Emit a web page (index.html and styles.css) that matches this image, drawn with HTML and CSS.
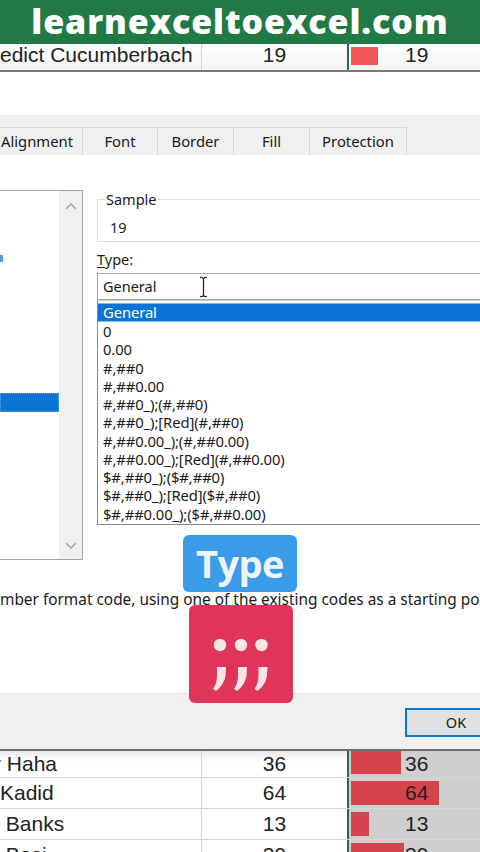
FILE: index.html
```html
<!DOCTYPE html>
<html>
<head>
<meta charset="utf-8">
<link rel="stylesheet" href="styles.css">
</head>
<body>
<div class="screen">
  <header class="banner">learnexceltoexcel.com</header>

  <div class="row top">
    <div class="c name">edict Cucumberbach</div>
    <div class="c num">19</div>
    <div class="c bar" style="--w:27px">19</div>
  </div>

  <section class="dialog">
    <div class="titlebar"></div>
    <div class="tabstrip">
      <div class="tab t1">Alignment</div>
      <div class="tab t2">Font</div>
      <div class="tab t3">Border</div>
      <div class="tab t4">Fill</div>
      <div class="tab t5">Protection</div>
    </div>

    <div class="content">
      <div class="catlist">
        <div class="catitems">
          <span class="mark"></span>
          <span class="catsel"></span>
        </div>
        <div class="scroll">
          <svg class="arrow" width="12" height="7" viewBox="0 0 12 7"><polyline points="1,6 6,1 11,6" fill="none" stroke="#a6a6a6" stroke-width="1.5"/></svg>
          <svg class="arrow" width="12" height="7" viewBox="0 0 12 7"><polyline points="1,1 6,6 11,1" fill="none" stroke="#a6a6a6" stroke-width="1.5"/></svg>
        </div>
      </div>

      <div class="right">
        <fieldset class="sample">
          <legend>Sample</legend>
          <div class="sample-val">19</div>
        </fieldset>
        <div class="typelabel"><span class="ul">T</span>ype:</div>
        <div class="typeinput">General
          <svg class="ibeam" width="9" height="22" viewBox="0 0 9 22"><path d="M1 1.5 Q4.5 1 4.5 3.5 Q4.5 1 8 1.5 M4.5 3.5 V18.5 M1 20.5 Q4.5 21 4.5 18.5 Q4.5 21 8 20.5" fill="none" stroke="#2a2a2a" stroke-width="1.3"/></svg>
        </div>
        <ul class="codes">
          <li class="sel">General</li>
          <li>0</li>
          <li>0.00</li>
          <li>#,##0</li>
          <li>#,##0.00</li>
          <li>#,##0_);(#,##0)</li>
          <li>#,##0_);[Red](#,##0)</li>
          <li>#,##0.00_);(#,##0.00)</li>
          <li>#,##0.00_);[Red](#,##0.00)</li>
          <li>$#,##0_);($#,##0)</li>
          <li>$#,##0_);[Red]($#,##0)</li>
          <li>$#,##0.00_);($#,##0.00)</li>
          <li>$#,##0.00_);[Red]($#,##0.00)</li>
        </ul>
      </div>

      <p class="desc">mber format code, using one of the existing codes as a starting point.</p>

      <div class="badge-type">Type</div>
      <svg class="badge-semi" width="104" height="98" viewBox="0 0 104 98">
        <rect x="0" y="0" width="104" height="98" rx="6" fill="#e0355a"/>
        <g fill="#fbe4e4">
          <circle cx="31" cy="40" r="6.2"/>
          <circle cx="52" cy="40" r="6.2"/>
          <circle cx="72.5" cy="40" r="6.2"/>
          <path d="M28 62 L37 62 L36.5 71 Q35 80 27 86 L24 84 Q28 78 28 71 Z"/>
          <path d="M49 62 L58 62 L57.5 71 Q56 80 48 86 L45 84 Q49 78 49 71 Z"/>
          <path d="M69.5 62 L78.5 62 L78 71 Q76.5 80 68.5 86 L65.5 84 Q69.5 78 69.5 71 Z"/>
        </g>
      </svg>
    </div>

    <div class="footer"><div class="ok">OK</div></div>
  </section>

  <div class="row b first">
    <div class="c name"><span class="cut">r</span>&nbsp;Haha</div>
    <div class="c num">36</div>
    <div class="c bar" style="--w:50px">36</div>
  </div>
  <div class="row b">
    <div class="c name">Kadid</div>
    <div class="c num">64</div>
    <div class="c bar" style="--w:88px">64</div>
  </div>
  <div class="row b">
    <div class="c name">&nbsp;Banks</div>
    <div class="c num">13</div>
    <div class="c bar" style="--w:18px">13</div>
  </div>
  <div class="row b">
    <div class="c name">&nbsp;Bosi</div>
    <div class="c num">39</div>
    <div class="c bar" style="--w:53px">39</div>
  </div>
</div>
</body>
</html>
```

FILE: styles.css
```css
* { box-sizing: border-box; margin: 0; padding: 0; }
body { margin: 0; background: #fff; }

.screen {
  width: 480px;
  height: 852px;
  overflow: hidden;
  display: flex;
  flex-direction: column;
  font-family: "Noto Sans", sans-serif;
  color: #1a1a1a;
}

.banner {
  flex: none;
  height: 44px;
  background: #217a46;
  color: #fff;
  font-family: "Open Sans", sans-serif;
  font-weight: 800;
  font-size: 34px;
  letter-spacing: 0.9px;
  line-height: 42px;
  text-align: center;
  white-space: nowrap;
}

/* spreadsheet rows */
.row {
  flex: none;
  display: grid;
  grid-template-columns: 202px 147px 1fr;
  font-family: "Liberation Sans", sans-serif;
  font-size: 21px;
  color: #222;
  border-bottom: 1px solid #d6d6d6;
}
.c {
  display: flex;
  align-items: center;
  white-space: nowrap;
  overflow: hidden;
}
.name { border-right: 1px solid #d4d4d4; }
.num { justify-content: center; border-right: 2px solid #1f7145; }
.bar {
  padding-left: 56px;
  background-repeat: no-repeat;
  background-position: left 2px bottom 3px;
  background-size: var(--w) 24px;
}

.row.top {
  height: 28px;
  border-bottom: 2px solid #7a7a7a;
  background: linear-gradient(#ffffff, #f4f4f4);
}
.row.top .c { align-items: flex-start; line-height: 21px; }
.row.top .bar {
  background-image: linear-gradient(#f05659, #f05659);
  background-size: var(--w) 18px;
  background-position: left 2px bottom 5px;
}

.row.b { height: 31px; }
.row.b.first {
  height: 27px;
  background: linear-gradient(#e9e9e9, #ffffff 40%);
}
.row.b .bar {
  background-color: #cfcfcf;
  background-image: linear-gradient(#d6444b, #d6444b);
}
.cut { margin-left: -6px; }

/* dialog */
.dialog {
  flex: none;
  display: flex;
  flex-direction: column;
  background: #f0f0f0;
}
.titlebar { height: 42px; background: #fff; }
.tabstrip {
  height: 41px;
  padding-top: 13px;
  display: flex;
  align-items: flex-end;
  background: #f0f0f0;
}
.tab {
  height: 28px;
  border-top: 1px solid #d9d9d9;
  border-right: 1px solid #d9d9d9;
  background: #f0f0f0;
  font-size: 14.8px;
  line-height: 26px;
  text-align: center;
  white-space: nowrap;
  color: #1a1a1a;
}
.t1 { width: 91px; margin-left: -8px; }
.t2 { width: 75px; }
.t3 { width: 76px; }
.t4 { width: 76px; }
.t5 { width: 97px; }

.content {
  position: relative;
  height: 538px;
  background: #fff;
  display: grid;
  grid-template-columns: 83px 1fr;
  grid-template-rows: auto 1fr;
  column-gap: 14px;
  align-content: start;
}

.catlist {
  margin-top: 35px;
  margin-left: -1px;
  height: 370px;
  border: 1px solid #a5a5a5;
  display: flex;
}
.catitems {
  flex: 1;
  display: flex;
  flex-direction: column;
}
.mark {
  margin-top: 64px;
  width: 3px;
  height: 7px;
  background: #5a9bd8;
}
.catsel {
  margin-top: 131px;
  height: 19px;
  background: #0a74d4;
  border: 1px dotted #6fa8e0;
}
.scroll {
  width: 23px;
  background: #f0f0f0;
  display: flex;
  flex-direction: column;
  justify-content: space-between;
  align-items: center;
  padding: 12px 0 10px;
}

.right {
  margin-right: -30px;
  display: flex;
  flex-direction: column;
}
.sample {
  margin-top: 35px;
  border: 1px solid #dcdcdc;
  padding: 10px 0 5px 7px;
}
.sample legend {
  padding: 0 1px;
  font-size: 14.5px;
  line-height: 18px;
}
.sample-val {
  padding-left: 5px;
  font-size: 14.5px;
  line-height: 18px;
}
.typelabel {
  margin-top: 8px;
  font-size: 14.5px;
  line-height: 18px;
}
.ul { text-decoration: underline; text-underline-offset: 2px; }
.typeinput {
  position: relative;
  margin-top: 5px;
  height: 27px;
  border: 1px solid #a9a9a9;
  padding-left: 5px;
  font-size: 14.5px;
  line-height: 25px;
}
.ibeam { position: absolute; left: 101px; top: 2px; }
.codes {
  list-style: none;
  height: 225px;
  overflow: hidden;
  border: 1px solid #8a8a8a;
  border-top-color: #c8c8c8;
  padding-top: 2px;
  font-size: 14.8px;
  letter-spacing: -0.1px;
}
.codes li {
  height: 18.25px;
  line-height: 18.25px;
  padding-left: 5px;
  white-space: nowrap;
}
.codes li.sel {
  background: #0a74d6;
  color: #fff;
  box-shadow: inset 0 1px 0 #7fb6ea, inset 0 -1px 0 #7fb6ea;
  height: 19px;
  line-height: 19px;
}

.desc {
  grid-column: 1 / 3;
  margin-top: 31px;
  font-size: 15.4px;
  line-height: 18px;
  white-space: nowrap;
  overflow: hidden;
}

.badge-type {
  position: absolute;
  left: 183px;
  top: 380px;
  width: 114px;
  height: 57px;
  border-radius: 6px;
  background: #3a9be8;
  color: #eef4fb;
  font-family: "Open Sans", sans-serif;
  font-weight: 700;
  font-size: 38px;
  line-height: 56px;
  text-align: center;
  letter-spacing: -0.5px;
}
.badge-semi {
  position: absolute;
  left: 189px;
  top: 450px;
}

.footer {
  height: 58px;
  border-top: 1px solid #e3e3e3;
  border-bottom: 2px solid #6e6e6e;
  background: #f0f0f0;
  padding: 14px 0 0 405px;
}
.ok {
  width: 102px;
  height: 29px;
  border: 2px solid #0a78d7;
  background: #e1e1e1;
  font-size: 14.5px;
  line-height: 25px;
  text-align: center;
}
```
